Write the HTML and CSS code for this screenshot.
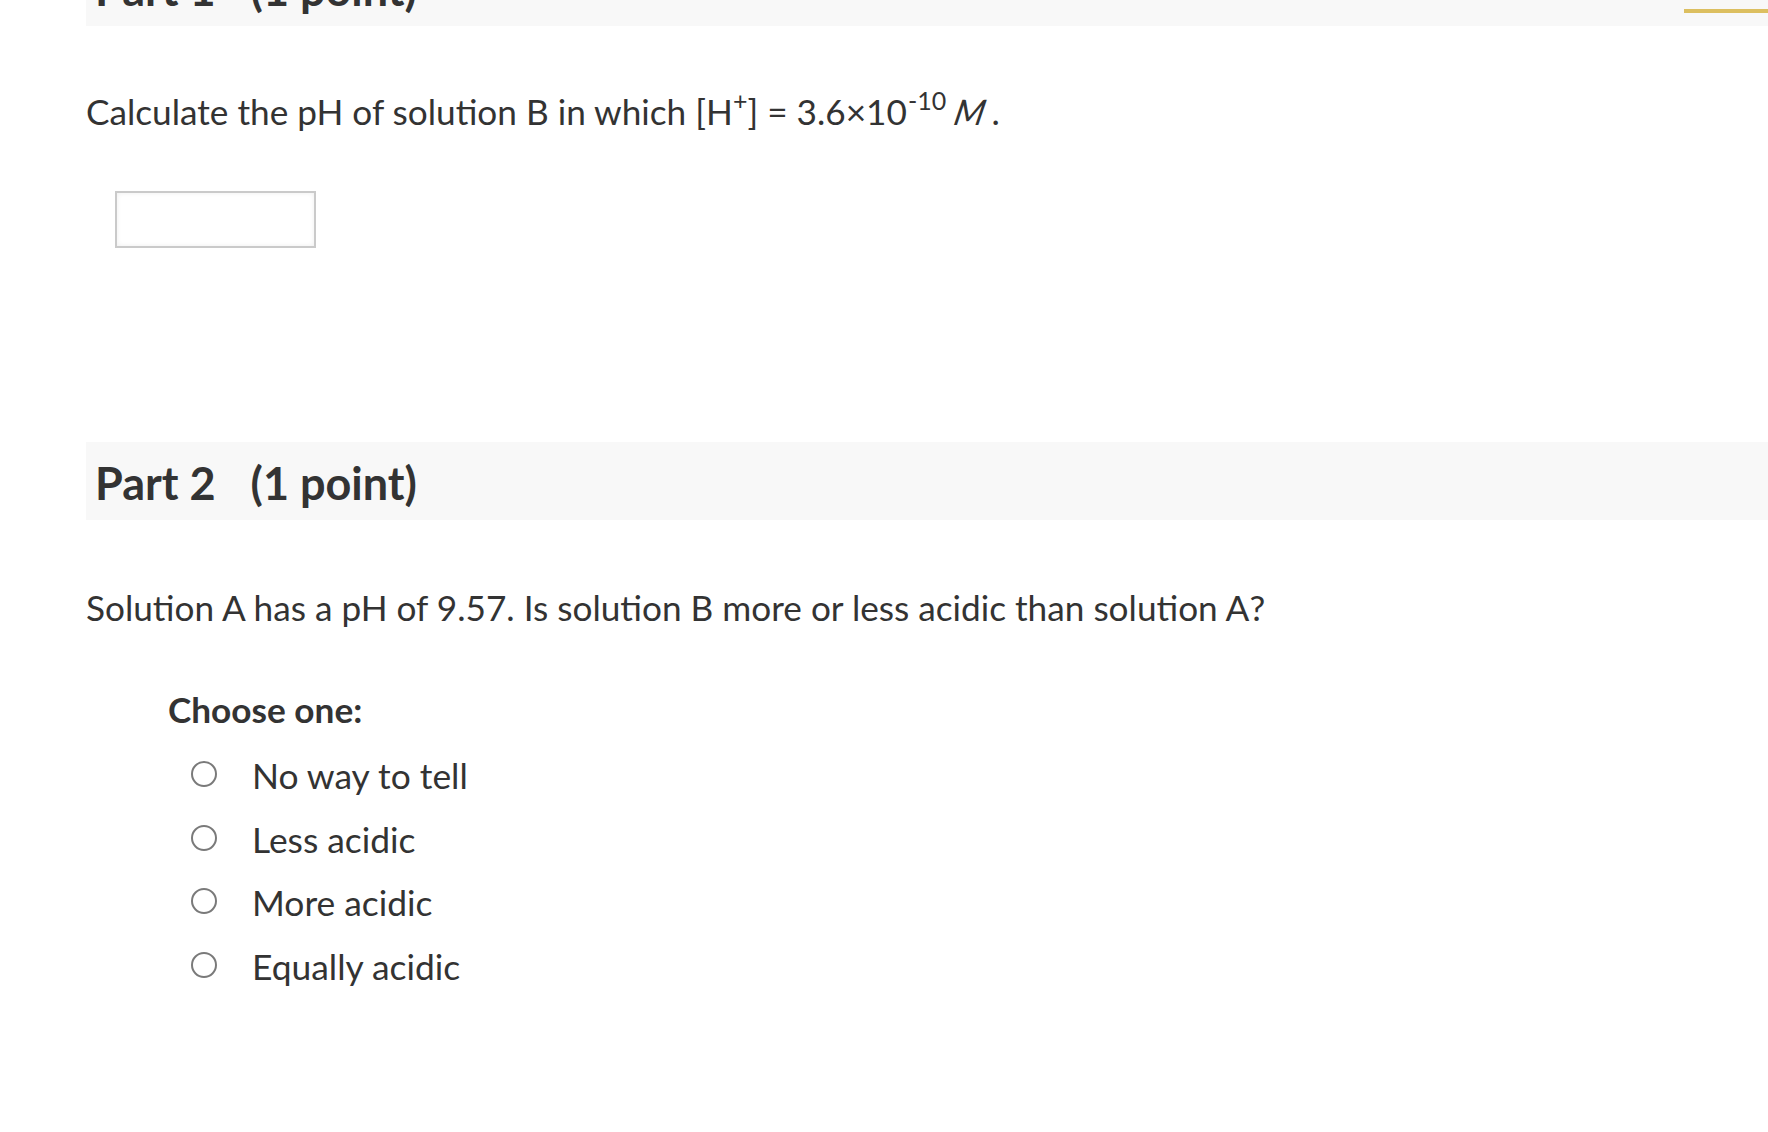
FILE: index.html
```html
<!DOCTYPE html>
<html lang="en">
<head>
<meta charset="utf-8">
<title>Part 2</title>
<link rel="stylesheet" href="styles.css">
</head>
<body>
<main class="page">
  <section class="part">
    <header class="part-head">
      <h2 class="part-title"><span>Part 1</span><span class="points">(1 point)</span></h2>
      <div class="progress"></div>
    </header>
    <p class="question">Calculate the pH of solution B in which [H<sup class="ion">+</sup>] = 3.6&times;10<sup class="exp">-10</sup> <i class="unit">M</i>.</p>
    <div class="answer"><input class="answer-box" type="text" aria-label="pH"></div>
  </section>

  <section class="part part-2">
    <header class="part-head">
      <h2 class="part-title"><span>Part 2</span><span class="points">(1 point)</span></h2>
    </header>
    <p class="question">Solution A has a pH of 9.57. Is solution B more or less acidic than solution A?</p>
    <div class="choices">
      <div class="choose">Choose one:</div>
      <label class="option"><span class="radio"></span><span class="opt-text">No way to tell</span></label>
      <label class="option"><span class="radio"></span><span class="opt-text">Less acidic</span></label>
      <label class="option"><span class="radio"></span><span class="opt-text">More acidic</span></label>
      <label class="option"><span class="radio"></span><span class="opt-text">Equally acidic</span></label>
    </div>
  </section>
</main>
</body>
</html>
```

FILE: styles.css
```css
html, body {
  margin: 0;
  padding: 0;
  background: #ffffff;
}

body {
  font-family: Lato, "Noto Sans", sans-serif;
  color: #333333;
  overflow: hidden;
}

.page {
  margin-top: -52px;
  padding-left: 86px;
}

.part-head {
  display: flex;
  justify-content: space-between;
  align-items: flex-end;
  background: #f8f8f8;
  height: 78px;
  box-sizing: border-box;
  padding: 9px 0 0 9px;
}

.part-title {
  align-self: flex-start;
  margin: 0;
  font-size: 45px;
  line-height: 64px;
  font-weight: 700;
  color: #333333;
  white-space: nowrap;
}

.points {
  margin-left: 35px;
}

.progress {
  width: 84px;
  height: 4px;
  background: #dcbf60;
  margin-bottom: 13px;
}

.question {
  margin: 64px 0 0 0;
  font-size: 35.2px;
  line-height: 43px;
}

.question sup {
  line-height: 0;
  font-size: 25px;
}

.ion {
  vertical-align: 15px;
}

.exp {
  vertical-align: 15px;
  margin-left: 1px;
}

.unit {
  font-style: italic;
  display: inline-block;
  transform: skewX(-12deg);
  margin-right: 6px;
}

.answer {
  margin: 58px 0 0 29px;
}

.answer-box {
  display: block;
  width: 201px;
  height: 57px;
  box-sizing: border-box;
  border: 2px solid #cacaca;
  background: #ffffff;
  box-shadow: inset 0 0 5px rgba(0, 0, 0, 0.07);
  margin: 0;
  padding: 0;
}

.part-2 {
  margin-top: 194px;
}

.part-2 .question {
  margin-top: 66px;
}

.choices {
  margin: 59px 0 0 82px;
  display: flex;
  flex-direction: column;
}

.choose {
  font-size: 35.2px;
  line-height: 42px;
  font-weight: 700;
  margin-bottom: 24px;
}

.option {
  display: flex;
  align-items: center;
  height: 43.5px;
  margin-bottom: 20px;
  font-size: 35.4px;
  line-height: 43.5px;
  padding-left: 23px;
}

.radio {
  width: 26px;
  height: 26px;
  box-sizing: border-box;
  border: 2px solid #7a7a7a;
  border-radius: 50%;
  background: #ffffff;
  margin-top: -3px;
  margin-right: 35px;
  flex: none;
}
```
